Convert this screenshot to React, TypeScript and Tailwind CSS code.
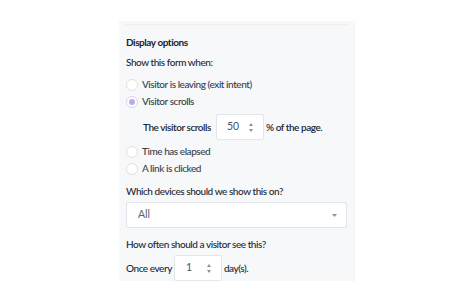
import React from "react";

function Radio({ checked, label }: { checked?: boolean; label: string }) {
  return (
    <div className="flex items-center h-[17px]">
      <span
        className={
          "w-[12px] h-[12px] rounded-full border flex items-center justify-center bg-white " +
          (checked ? "border-[#d9d3f3]" : "border-[#dcdfe3]")
        }
      >
        {checked && <span className="w-[6px] h-[6px] rounded-full bg-[#b8acec]" />}
      </span>
      <span className="ml-[4px] text-[#36404d]">{label}</span>
    </div>
  );
}

function Spinner() {
  return (
    <span className="flex flex-col items-center gap-[3px] text-[#8a929c]">
      <svg width="4" height="3" viewBox="0 0 4 3"><path d="M0 3L2 0L4 3Z" fill="currentColor" /></svg>
      <svg width="4" height="3" viewBox="0 0 4 3"><path d="M0 0L2 3L4 0Z" fill="currentColor" /></svg>
    </span>
  );
}

export default function App() {
  return (
    <div className="w-[474px] h-[303px] bg-white" style={{ fontFamily: "Lato, 'Noto Sans', sans-serif" }}>
      <div className="pt-[21px] pl-[119px]">
        <div className="w-[235px] h-[260px] bg-[#f7f8f9] shadow-[1px_0_1px_rgba(0,0,0,0.04)] px-[7px] text-[10px] font-medium tracking-[-0.45px] text-[#1c2736]">
          <div className="h-[4px] border-b border-[#eceef0] mx-[-1px]" />
          <div className="font-bold text-[10px] tracking-[-0.45px] text-[#18222f] mt-[10px] leading-[14px]">Display options</div>
          <div className="mt-[6px] leading-[14px]">Show this form when:</div>
          <div className="mt-[7px] flex flex-col gap-[0px]">
            <Radio label="Visitor is leaving (exit intent)" />
            <Radio checked label="Visitor scrolls" />
          </div>
          <div className="flex items-center mt-[4px] ml-[17px] h-[26px]">
            <span className="font-semibold">The visitor scrolls</span>
            <div className="ml-[5px] w-[48px] h-[26px] bg-white border border-[#e3e6ea] rounded-[2px] flex items-center pl-[10px] pr-[10px] justify-between">
              <span className="text-[10.5px] font-normal text-[#4a535e] tracking-normal">50</span>
              <Spinner />
            </div>
            <span className="ml-[2px] font-semibold">% of the page.</span>
          </div>
          <div className="mt-[3px] flex flex-col">
            <Radio label="Time has elapsed" />
            <Radio label="A link is clicked" />
          </div>
          <div className="mt-[7px] leading-[14px]">Which devices should we show this on?</div>
          <div className="mt-[4px] h-[26px] w-[221px] bg-white border border-[#e1e4e8] rounded-[2px] flex items-center justify-between pl-[11px] pr-[9px]">
            <span className="text-[10.5px] font-normal text-[#5b636d] tracking-normal">All</span>
            <svg width="5" height="3" viewBox="0 0 5 3"><path d="M0 0L2.5 3L5 0Z" fill="#8a929c" /></svg>
          </div>
          <div className="mt-[9px] leading-[14px]">How often should a visitor see this?</div>
          <div className="flex items-center mt-[4px] h-[26px]">
            <span>Once every</span>
            <div className="ml-[2px] w-[48px] h-[26px] bg-white border border-[#e3e6ea] rounded-[2px] flex items-center pl-[11px] pr-[10px] justify-between">
              <span className="text-[10.5px] font-normal text-[#4a535e] tracking-normal">1</span>
              <Spinner />
            </div>
            <span className="ml-[2px]">day(s).</span>
          </div>
        </div>
      </div>
    </div>
  );
}
